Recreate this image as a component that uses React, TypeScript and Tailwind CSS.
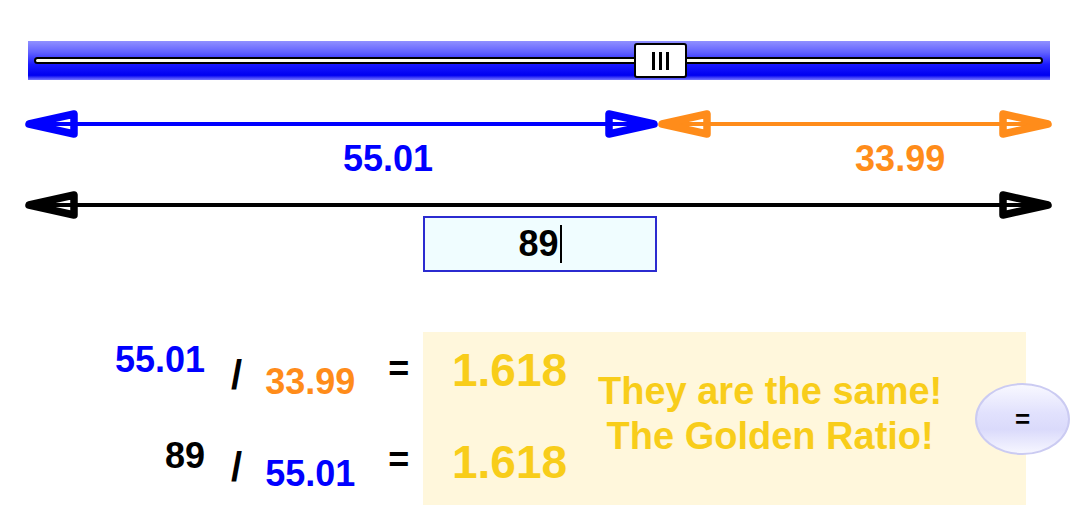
import React from "react";

function Arrow({ y, x1, x2, color }: { y: number; x1: number; x2: number; color: string }) {
  const L = 49;
  const h = 10;
  return (
    <g stroke={color} fill="none" strokeLinejoin="round" strokeLinecap="round">
      <line x1={x1 + 4} y1={y} x2={x2 - 4} y2={y} strokeWidth={4} />
      <polygon points={`${x1 + 4},${y} ${x1 + L},${y - h} ${x1 + L},${y + h}`} strokeWidth={7.5} />
      <polygon points={`${x2 - 4},${y} ${x2 - L},${y - h} ${x2 - L},${y + h}`} strokeWidth={7.5} />
    </g>
  );
}

export default function App() {
  return (
    <div className="w-[1086px] h-[528px] bg-white overflow-hidden font-['Liberation_Sans',Arial,sans-serif] flex flex-col">
      {/* slider */}
      <div className="ml-[28px] mt-[41px] w-[1022px] h-[39px] shrink-0 relative bg-[linear-gradient(to_bottom,#9090ff_0%,#6060ff_30%,#1a1aff_60%,#0000f0_88%,#7a7aff_100%)] flex items-center">
        <div className="ml-[6px] w-[1009px] h-[7px] rounded-full border-2 border-black bg-[#fffff2]" />
        <div className="absolute left-[606px] top-[2px] w-[53px] h-[35px] bg-white border-2 border-black rounded-[3px] flex items-center justify-center gap-[4px]">
          <span className="w-[3px] h-[18px] bg-black" />
          <span className="w-[3px] h-[18px] bg-black" />
          <span className="w-[3px] h-[18px] bg-black" />
        </div>
      </div>

      {/* blue / orange arrows */}
      <svg width="1086" height="30" className="mt-[29px] block shrink-0 overflow-visible">
        <Arrow y={15} x1={25} x2={658} color="#0000ff" />
        <Arrow y={15} x1={658} x2={1052} color="#ff8c1a" />
      </svg>

      {/* labels */}
      <div className="flex mt-[2px] text-[36px] leading-none font-bold shrink-0">
        <span className="ml-[343px] text-[#0000ff]">55.01</span>
        <span className="ml-[422px] text-[#ff8c1a]">33.99</span>
      </div>

      {/* black arrow */}
      <svg width="1086" height="20" className="mt-[18px] block shrink-0 overflow-visible">
        <Arrow y={10} x1={25} x2={1052} color="#000000" />
      </svg>

      {/* input */}
      <div className="mt-[1px] ml-[423px] w-[234px] h-[56px] shrink-0 border-2 border-[#2b2bd0] bg-[#f0fdff] flex items-center justify-center text-[36px] leading-none font-bold text-black">
        <span>89</span>
        <span className="ml-[1px] w-[2px] h-[38px] bg-black" />
      </div>

      {/* bottom */}
      <div className="mt-[60px] flex items-start shrink-0">
        <div className="w-[423px] shrink-0 flex items-start font-bold">
          <div className="w-[205px] flex flex-col items-end pt-[10px] gap-[60px] text-[36px] leading-none">
            <span className="text-[#0000ff]">55.01</span>
            <span className="text-black">89</span>
          </div>
          <div className="ml-[26px] flex flex-col pt-[23px] gap-[52px] text-[40px] leading-none text-black">
            <span>/</span>
            <span>/</span>
          </div>
          <div className="ml-[23px] flex flex-col pt-[32px] gap-[56px] text-[36px] leading-none">
            <span className="text-[#ff8c1a]">33.99</span>
            <span className="text-[#0000ff]">55.01</span>
          </div>
          <div className="ml-[33px] flex flex-col pt-[19px] gap-[55px] text-[36px] leading-none text-black">
            <span>=</span>
            <span>=</span>
          </div>
        </div>

        <div className="w-[603px] h-[173px] shrink-0 bg-[#fff7dc] flex items-start font-bold text-[#f8cd1a]">
          <div className="pl-[29px] pt-[15px] flex flex-col gap-[46px] text-[46px] leading-none">
            <span>1.618</span>
            <span>1.618</span>
          </div>
          <div className="ml-[23px] pt-[37px] w-[360px] text-center text-[38px] leading-[45px] whitespace-nowrap">
            They are the same!
            <br />
            The Golden Ratio!
          </div>
        </div>

        <div className="-ml-[51px] mt-[51px] w-[95px] h-[72px] shrink-0 rounded-[50%] border-2 border-[#cbcbf2] bg-[linear-gradient(to_bottom,#f8f8ff_0%,#e2e2fd_40%,#dadafb_65%,#f6f6ff_100%)] flex items-center justify-center text-[26px] leading-none font-bold text-black">
          =
        </div>
      </div>
    </div>
  );
}
